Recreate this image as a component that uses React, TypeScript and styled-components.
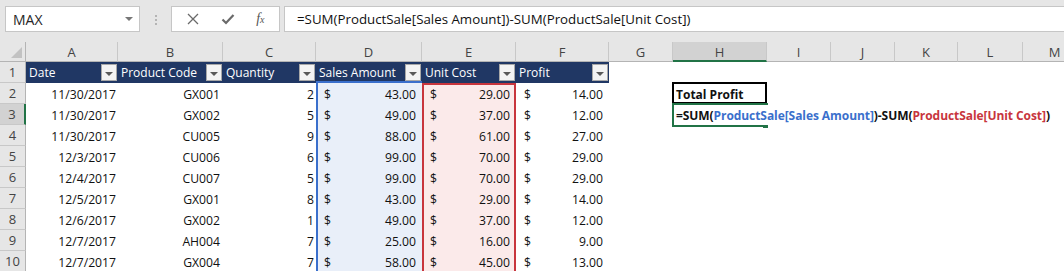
import React from "react";
import styled, { createGlobalStyle, css } from "styled-components";

const GlobalStyle = createGlobalStyle`
  html, body {
    margin: 0;
    padding: 0;
    background: #ffffff;
    overflow: hidden;
  }
  body {
    font-family: "Open Sans", "Noto Sans", sans-serif;
    color: #000;
  }
`;

const NAVY = "#203764";
const BLUE = "#3a6fcc";
const RED = "#c8353d";
const GREEN = "#217346";

const COLS = [
  { name: "", w: 26 },
  { name: "A", w: 92 },
  { name: "B", w: 105 },
  { name: "C", w: 93 },
  { name: "D", w: 106 },
  { name: "E", w: 94 },
  { name: "F", w: 93 },
  { name: "G", w: 64 },
  { name: "H", w: 94 },
  { name: "I", w: 64 },
  { name: "J", w: 64 },
  { name: "K", w: 63 },
  { name: "L", w: 65 },
  { name: "M", w: 64 },
];

const rows: [string, string, number, number, number, number][] = [
  ["11/30/2017", "GX001", 2, 43, 29, 14],
  ["11/30/2017", "GX002", 5, 49, 37, 12],
  ["11/30/2017", "CU005", 9, 88, 61, 27],
  ["12/3/2017", "CU006", 6, 99, 70, 29],
  ["12/4/2017", "CU007", 5, 99, 70, 29],
  ["12/5/2017", "GX001", 8, 43, 29, 14],
  ["12/6/2017", "GX002", 1, 49, 37, 12],
  ["12/7/2017", "AH004", 7, 25, 16, 9],
  ["12/7/2017", "GX004", 7, 58, 45, 13],
];

const headers = ["Date", "Product Code", "Quantity", "Sales Amount", "Unit Cost", "Profit"];

const Page = styled.div`
  width: 1064px;
  height: 271px;
  overflow: hidden;
  background: #e6e6e6;
`;

const Toolbar = styled.div`
  height: 42px;
  display: flex;
  align-items: flex-start;
  padding-top: 6px;
  box-sizing: border-box;
`;

const NameBox = styled.div`
  margin-left: 5px;
  width: 135px;
  height: 26px;
  box-sizing: border-box;
  background: #fff;
  border: 1px solid #c6c6c6;
  display: flex;
  align-items: center;
  justify-content: space-between;
  padding: 0 6px 0 7px;
  font-size: 14px;
  color: #262626;
`;

const Caret = styled.span`
  width: 0;
  height: 0;
  border-left: 4px solid transparent;
  border-right: 4px solid transparent;
  border-top: 4px solid #777;
`;

const Dots = styled.div`
  width: 31px;
  display: flex;
  flex-direction: column;
  align-items: center;
  gap: 2px;
  padding-top: 9px;
  span {
    width: 2px;
    height: 2px;
    background: #b4b4b4;
  }
`;

const FxBox = styled.div`
  width: 109px;
  height: 26px;
  box-sizing: border-box;
  background: #fff;
  border: 1px solid #c6c6c6;
  display: flex;
  align-items: center;
  justify-content: space-around;
  padding: 0 4px;
`;

const FxLabel = styled.span`
  font-family: "Liberation Serif", serif;
  font-style: italic;
  font-size: 14px;
  color: #555;
  sub {
    font-size: 10px;
    vertical-align: baseline;
  }
`;

const FormulaInput = styled.div`
  margin-left: 4px;
  flex: 1;
  height: 26px;
  box-sizing: border-box;
  background: #fff;
  border: 1px solid #c6c6c6;
  border-right: none;
  display: flex;
  align-items: center;
  padding-left: 12px;
  font-size: 13.3px;
  color: #111;
  white-space: nowrap;
`;

const Grid = styled.div`
  display: grid;
  grid-template-columns: ${COLS.map((c) => c.w + "px").join(" ")};
  grid-template-rows: 20px;
  grid-auto-rows: 21px;
  background: #fff;
`;

const ColHead = styled.div<{ $selected?: boolean }>`
  background: ${(p) => (p.$selected ? "#d2d2d2" : "#e6e6e6")};
  border-right: 1px solid #c8c8c8;
  border-bottom: ${(p) => (p.$selected ? `2px solid ${GREEN}` : "1px solid #b4b4b4")};
  box-sizing: border-box;
  display: flex;
  align-items: center;
  justify-content: center;
  font-size: 13px;
  color: #444;
  padding-top: 1px;
`;

const Corner = styled.div`
  background: #e6e6e6;
  border-right: 1px solid #b4b4b4;
  border-bottom: 1px solid #b4b4b4;
  box-sizing: border-box;
  display: flex;
  align-items: flex-end;
  justify-content: flex-end;
  padding: 0 3px 3px 0;
`;

const CornerTri = styled.span`
  width: 0;
  height: 0;
  border-left: 11px solid transparent;
  border-bottom: 11px solid #c2c2c2;
`;

const RowHead = styled.div<{ $selected?: boolean }>`
  background: ${(p) => (p.$selected ? "#d2d2d2" : "#e6e6e6")};
  border-right: ${(p) => (p.$selected ? `2px solid ${GREEN}` : "1px solid #b4b4b4")};
  border-bottom: 1px solid #c8c8c8;
  box-sizing: border-box;
  display: flex;
  align-items: center;
  justify-content: center;
  font-size: 13px;
  color: #444;
`;

const HeadCell = styled.div<{ $under?: string }>`
  background: ${NAVY};
  color: #fff;
  font-size: 12px;
  display: flex;
  align-items: center;
  justify-content: space-between;
  padding-left: 3px;
  box-sizing: border-box;
  white-space: nowrap;
  ${(p) =>
    p.$under &&
    css`
      box-shadow: inset 0 -2px 0 ${p.$under};
    `}
`;

const FilterButton = styled.span`
  width: 16px;
  height: 17px;
  margin-right: 1px;
  box-sizing: border-box;
  background: #f3f3f3;
  border: 1px solid #a8a8a8;
  display: flex;
  align-items: center;
  justify-content: center;
  &::after {
    content: "";
    width: 0;
    height: 0;
    border-left: 4px solid transparent;
    border-right: 4px solid transparent;
    border-top: 4px solid #595959;
    margin-top: 2px;
  }
`;

type Tint = "blue" | "red" | undefined;

const Cell = styled.div<{ $align?: "left" | "right"; $tint?: Tint; $top?: boolean }>`
  font-size: 12.2px;
  color: #111;
  display: flex;
  align-items: center;
  justify-content: ${(p) => (p.$align === "right" ? "flex-end" : "flex-start")};
  padding: 2px 2px 0 3px;
  box-sizing: border-box;
  white-space: nowrap;
  ${(p) =>
    p.$tint === "blue" &&
    css`
      background: #e9eff9;
      box-shadow: inset 2px 0 0 ${BLUE};
    `}
  ${(p) =>
    p.$tint === "red" &&
    css`
      background: #fbeaea;
      box-shadow: inset 2px 0 0 ${RED}, inset -2px 0 0 ${RED}
        ${p.$top ? `, inset 0 2px 0 ${RED}` : ""};
    `}
`;

const CodeCell = styled(Cell)`
  padding-right: 3px;
`;

const Money = styled(Cell)`
  justify-content: space-between;
  padding: 2px 6px 0 8px;
`;

const Empty = styled.div``;

const BoxedCell = styled(Cell)`
  position: relative;
  font-weight: 700;
  font-size: 12px;
  &::after {
    content: "";
    position: absolute;
    top: -1px;
    left: -1px;
    right: 0;
    bottom: 0;
    border: 2px solid #000;
  }
`;

const ActiveCell = styled(Cell)`
  position: relative;
  font-weight: 700;
  font-size: 12px;
  letter-spacing: -0.07px;
  overflow: visible;
  z-index: 1;
  &::before {
    content: "";
    position: absolute;
    top: -1px;
    left: -1px;
    right: -1px;
    bottom: -2px;
    border: 2px solid ${GREEN};
    border-right: none;
  }
`;

const FillHandle = styled.span`
  position: absolute;
  right: -1px;
  bottom: -3px;
  width: 5px;
  height: 3px;
  background: ${GREEN};
`;

const Ref = styled.span<{ $color: string }>`
  color: ${(p) => p.$color};
`;

const TextCursor = styled.span`
  display: inline-block;
  width: 1px;
  height: 17px;
  background: #000;
  margin-left: 2px;
`;

const fmt = (n: number) => n.toFixed(2);

function MoneyCell({ value, tint, top }: { value: number; tint?: Tint; top?: boolean }) {
  return (
    <Money $tint={tint} $top={top}>
      <span>$</span>
      <span>{fmt(value)}</span>
    </Money>
  );
}

export default function App() {
  return (
    <Page>
      <GlobalStyle />
      <Toolbar>
        <NameBox>
          <span>MAX</span>
          <Caret />
        </NameBox>
        <Dots>
          <span />
          <span />
          <span />
        </Dots>
        <FxBox>
          <svg width="14" height="14" viewBox="0 0 14 14">
            <path d="M2 2 L12 12 M12 2 L2 12" stroke="#6a6a6a" strokeWidth="1.3" />
          </svg>
          <svg width="14" height="14" viewBox="0 0 14 14">
            <path d="M1.5 7.5 L5 11 L12.5 3" stroke="#6a6a6a" strokeWidth="2.2" fill="none" />
          </svg>
          <FxLabel>
            f<sub>x</sub>
          </FxLabel>
        </FxBox>
        <FormulaInput>=SUM(ProductSale[Sales Amount])-SUM(ProductSale[Unit Cost])</FormulaInput>
      </Toolbar>

      <Grid>
        <Corner>
          <CornerTri />
        </Corner>
        {COLS.slice(1).map((c) => (
          <ColHead key={c.name} $selected={c.name === "H"}>
            {c.name}
          </ColHead>
        ))}

        <RowHead>1</RowHead>
        {headers.map((h, i) => (
          <HeadCell key={h} $under={i === 3 ? BLUE : undefined}>
            <span>{h}</span>
            <FilterButton />
          </HeadCell>
        ))}
        {COLS.slice(7).map((c) => (
          <Empty key={c.name} />
        ))}

        {rows.map((r, i) => {
          const rowNum = i + 2;
          return (
            <React.Fragment key={rowNum}>
              <RowHead $selected={rowNum === 3}>{rowNum}</RowHead>
              <Cell $align="right">{r[0]}</Cell>
              <CodeCell $align="right">{r[1]}</CodeCell>
              <Cell $align="right">{r[2]}</Cell>
              <MoneyCell value={r[3]} tint="blue" />
              <MoneyCell value={r[4]} tint="red" top={rowNum === 2} />
              <MoneyCell value={r[5]} />
              <Empty />
              {rowNum === 2 ? (
                <BoxedCell>Total Profit</BoxedCell>
              ) : rowNum === 3 ? (
                <ActiveCell>
                  <span>
                    =SUM(<Ref $color={BLUE}>ProductSale[Sales Amount]</Ref>)-SUM(
                    <Ref $color={RED}>ProductSale[Unit Cost]</Ref>)
                  </span>
                  <TextCursor />
                  <FillHandle />
                </ActiveCell>
              ) : (
                <Empty />
              )}
              {COLS.slice(9).map((c) => (
                <Empty key={c.name} />
              ))}
            </React.Fragment>
          );
        })}
      </Grid>
    </Page>
  );
}
